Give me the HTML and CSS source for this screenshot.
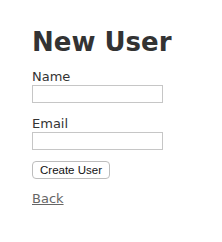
FILE: index.html
```html
<!DOCTYPE html>
<html lang="en">
<head>
    <meta charset="UTF-8">
    <meta name="viewport" content="width=device-width, initial-scale=1.0">
    <title>New User</title>
    <link rel="stylesheet" href="styles.css">
</head>
<body>
    <h1>New User</h1>

    <form class="user-form" action="#" method="post">
        <div class="field">
            <label for="user_name">Name</label>
            <input type="text" id="user_name" name="user[name]">
        </div>
        <div class="field">
            <label for="user_email">Email</label>
            <input type="text" id="user_email" name="user[email]">
        </div>
        <div class="actions">
            <button type="submit">Create User</button>
        </div>
    </form>

    <a href="#" class="back">Back</a>
</body>
</html>
```

FILE: styles.css
```css
body {
    margin: 0;
    padding: 33px 32px;
    background-color: #fff;
    color: #333;
    font-family: "DejaVu Sans", Verdana, sans-serif;
    font-size: 13px;
    line-height: 18px;
}

h1 {
    font-size: 26px;
    line-height: 18px;
    margin: 0 0 17px;
}

/* Форма */
.field {
    margin-bottom: 12px;
}

.field label {
    display: block;
    line-height: 17px;
}

.field input {
    display: block;
    box-sizing: border-box;
    width: 131px;
    height: 18px;
    margin: 0;
    padding: 1px 3px;
    border: 1px solid #c6c6c6;
    font-size: 13px;
}

.actions {
    margin-top: -1px;
    margin-bottom: 11px;
}

.actions button {
    display: block;
    box-sizing: border-box;
    height: 18px;
    padding: 0 7px;
    background-color: #fff;
    border: 1px solid #bdbdbd;
    border-radius: 4px;
    color: #111;
    font-family: "Liberation Sans", Arial, sans-serif;
    font-size: 11.5px;
    line-height: 16px;
}

.back {
    color: #666;
}
```
